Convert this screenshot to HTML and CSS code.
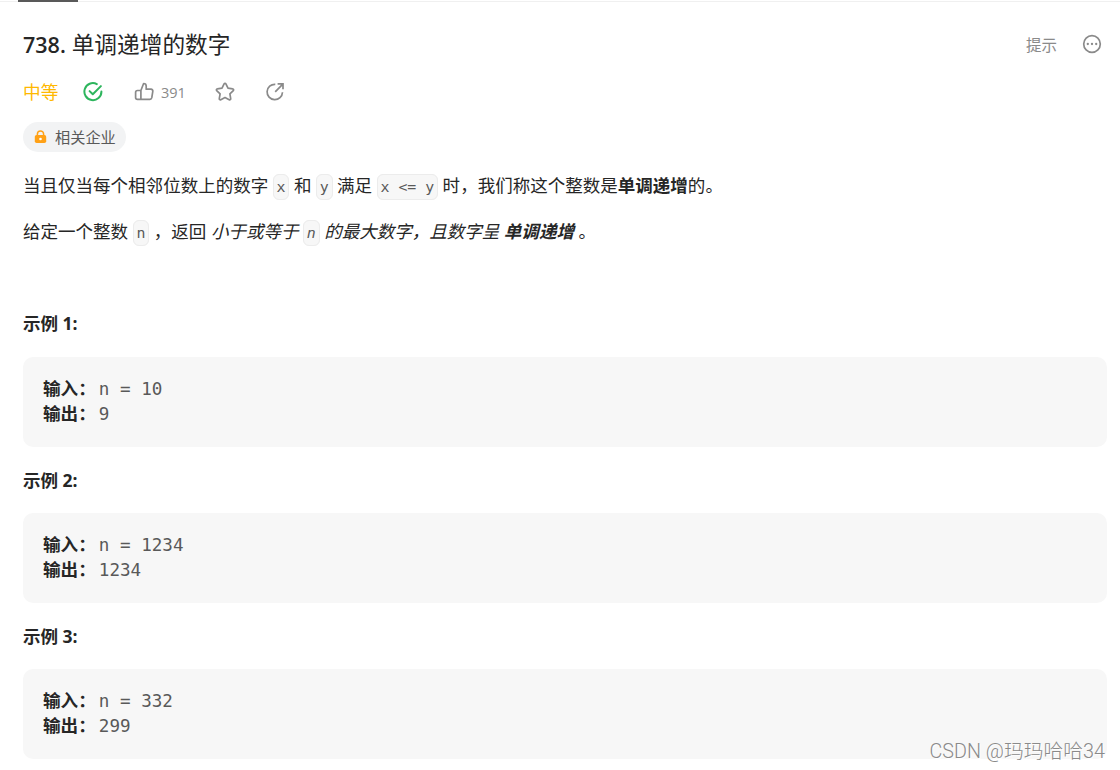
FILE: index.html
```html
<!DOCTYPE html>
<html lang="zh-CN">
<head>
    <meta charset="UTF-8">
    <meta name="viewport" content="width=device-width, initial-scale=1.0">
    <title>738. 单调递增的数字</title>
    <link rel="stylesheet" href="styles.css">
</head>
<body>
    <div class="tabs"><div class="tab-line"></div></div>
    <div class="problem">
        <div class="head">
            <h1><span class="num">738.</span> 单调递增的数字</h1>
            <div class="tools">
                <span class="hint">提示</span>
                <svg class="more" width="20" height="20" viewBox="0 0 20 20">
                    <circle cx="10" cy="10" r="8.3" fill="none" stroke="#8a8a8a" stroke-width="1.7"/>
                    <circle cx="5.8" cy="10" r="1.15" fill="#8a8a8a"/>
                    <circle cx="10" cy="10" r="1.15" fill="#8a8a8a"/>
                    <circle cx="14.2" cy="10" r="1.15" fill="#8a8a8a"/>
                </svg>
            </div>
        </div>
        <div class="info">
            <span class="level">中等</span>
            <svg class="icon done" viewBox="0 0 20 20">
                <path d="M13.8 2.1A8.5 8.5 0 1 0 18.4 9.5"/>
                <path d="M6.6 9.1l3.2 3.2 8.1-8.2"/>
            </svg>
            <svg class="icon like" viewBox="0 0 20 20">
                <path d="M6.9 8.5L9.6 1.5c1.6 0 2.6 1.1 2.6 2.6v3.1h4.8c1.2 0 2 1 1.8 2.2l-1 6.3c-.2 1-.9 1.7-1.9 1.7H3.5c-1.1 0-1.9-.8-1.9-1.9v-5.1c0-1.1.8-1.9 1.9-1.9h3.4zM6.9 8.5v8.9"/>
            </svg>
            <span class="count">391</span>
            <svg class="icon star" viewBox="0 0 20 20">
                <path d="M9.1 1.9c.4-.8 1.4-.8 1.8 0l2.1 4.3 4.7.7c.9.1 1.2 1.1.6 1.7l-3.4 3.3.8 4.7c.2.9-.7 1.5-1.5 1.1L10 15.5l-4.2 2.2c-.8.4-1.7-.2-1.5-1.1l.8-4.7-3.4-3.3c-.6-.6-.3-1.6.6-1.7l4.7-.7z"/>
            </svg>
            <svg class="icon share" viewBox="0 0 20 20">
                <path d="M10.3 2.3A7.7 7.7 0 1 0 17.5 10.3"/>
                <path d="M12.6 1.9h5.4v5.4M17.8 2.1l-7.6 7.7"/>
            </svg>
        </div>
        <div class="company">
            <svg width="13" height="14" viewBox="0 0 13 14">
                <path d="M3.4 6V4a3.1 3.1 0 0 1 6.2 0v2" fill="none" stroke="#ffa116" stroke-width="1.5"/>
                <rect x="0.8" y="5" width="11.4" height="8" rx="1.8" fill="#ffa116"/>
                <circle cx="6.5" cy="9" r="1.3" fill="#fff"/>
            </svg>
            <span>相关企业</span>
        </div>
        <div class="content">
            <p>当且仅当每个相邻位数上的数字 <code>x</code> 和 <code>y</code> 满足 <code>x &lt;= y</code> 时，我们称这个整数是<strong>单调递增</strong>的。</p>
            <p>给定一个整数 <code>n</code> ，返回 <em>小于或等于 <code>n</code> 的最大数字，且数字呈 <strong>单调递增</strong></em> 。</p>
            <p>&nbsp;</p>
            <p class="first"><strong>示例 1:</strong></p>
<pre><strong>输入：</strong>n = 10
<strong>输出：</strong>9
</pre>
            <p><strong>示例 2:</strong></p>
<pre><strong>输入：</strong>n = 1234
<strong>输出：</strong>1234
</pre>
            <p><strong>示例 3:</strong></p>
<pre><strong>输入：</strong>n = 332
<strong>输出：</strong>299
</pre>
        </div>
    </div>
    <div class="mark">CSDN @玛玛哈哈34</div>
</body>
</html>
```
FILE: styles.css
```css
body {margin: 0; height: 770px; overflow: hidden; background-color: white; color: #262626; font-family: "Open Sans", "Noto Sans CJK SC", sans-serif; font-size: 17.53px;}
.tabs {height: 2px; padding-left: 18px; background: linear-gradient(white 1px, #f0f0f0 1px);}
.tab-line {width: 60px; height: 2px; background-color: #595959;}
.problem {padding: 25px 13px 0 23px;}
.head {display: flex; justify-content: space-between; height: 36px;}
h1 {margin: 0; font-size: 22.7px; line-height: 36px; font-weight: 400;}
.num {font-weight: 600; font-size: 21.5px;}
.tools {display: flex; gap: 25px; padding-right: 5px; color: #8a8a8a;}
.hint {font-size: 15.5px; line-height: 36px;}
.more {margin-top: 7px;}
.info {display: flex; align-items: center; height: 30px; margin-top: 14px;}
.level {width: 60px; margin-bottom: 2px; color: #ffb800; font-size: 17.7px;}
.icon {width: 20px; height: 20px; fill: none; stroke: #8a8a8a; stroke-width: 1.7; stroke-linejoin: round; stroke-linecap: round;}
.done {stroke: #2db55d; stroke-width: 2; margin-right: 31px;}
.count {width: 25px; margin: 0 29px 0 7px; color: #8a8a8a; font-size: 14.5px;}
.star {margin-right: 30px;}
.share {stroke-linecap: butt; stroke-linejoin: miter;}
.company {display: flex; align-items: center; gap: 8px; width: 92px; height: 30px; margin-top: 15px; padding-left: 11px; border-radius: 15px; background-color: #f2f3f4; color: #595959; font-size: 15.2px; white-space: nowrap;}
.company span {margin-bottom: 2px;}
.content {padding-top: 20px;}
p {margin: 0 0 20px; height: 26px; line-height: 26px; white-space: nowrap;}
.first {margin-bottom: 21px;}
code {padding: 3px 2.8px; border: 1px solid #ececec; border-radius: 6px; background-color: #f7f7f7; color: #595959; font-family: "DejaVu Sans Mono", monospace; font-size: 14.9px;}
pre {height: 50px; margin: 0 0 20px; padding: 20px; border-radius: 10px; background-color: #f7f7f7; color: #595959; font-family: "DejaVu Sans Mono", "Noto Sans CJK SC", monospace; font-size: 17.6px; line-height: 25px;}
pre strong {margin-right: 3px; color: #262626;}
.mark {position: absolute; right: 15px; bottom: 4px; color: #8a8a8a; font-family: Roboto, "Noto Sans CJK SC", sans-serif; font-size: 19.8px; font-weight: 300; line-height: 28px; text-shadow: 1px 1px white;}
```
